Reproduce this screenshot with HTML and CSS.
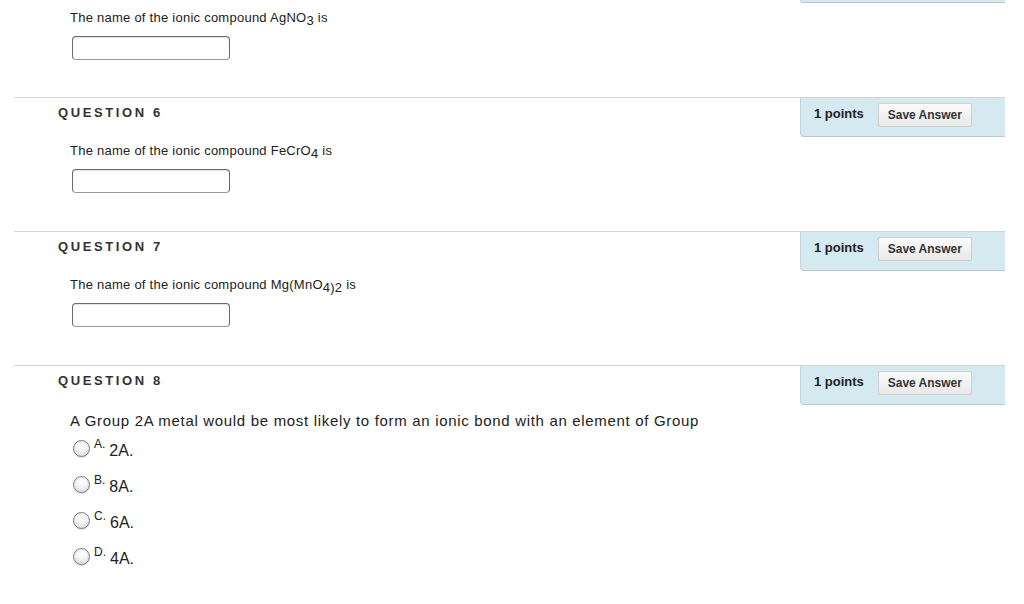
FILE: index.html
```html
<!DOCTYPE html>
<html>
<head>
<meta charset="utf-8">
<link rel="stylesheet" href="styles.css">
</head>
<body>
<div class="page">
  <div class="question q-partial">
    <div class="q-stub"></div>
    <div class="q-body">
      <div class="q-text first">The name of the ionic compound AgNO<span class="sub">3</span> is</div>
      <div class="q-input"></div>
    </div>
  </div>
  <div class="question">
    <div class="q-head">
      <div class="q-title">QUESTION 6</div>
      <div class="q-points"><span class="pts">1 points</span><button class="save">Save Answer</button></div>
    </div>
    <div class="q-body">
      <div class="q-text">The name of the ionic compound FeCrO<span class="sub">4</span> is</div>
      <div class="q-input"></div>
    </div>
  </div>
  <div class="question">
    <div class="q-head">
      <div class="q-title">QUESTION 7</div>
      <div class="q-points"><span class="pts">1 points</span><button class="save">Save Answer</button></div>
    </div>
    <div class="q-body">
      <div class="q-text">The name of the ionic compound Mg(MnO<span class="sub">4)2</span> is</div>
      <div class="q-input"></div>
    </div>
  </div>
  <div class="question last">
    <div class="q-head">
      <div class="q-title">QUESTION 8</div>
      <div class="q-points"><span class="pts">1 points</span><button class="save">Save Answer</button></div>
    </div>
    <div class="q-body mc">
      <div class="mc-text">A Group 2A metal would be most likely to form an ionic bond with an element of Group</div>
      <div class="opt"><span class="radio"></span><span class="letter">A.</span><span class="ans">2A.</span></div>
      <div class="opt"><span class="radio"></span><span class="letter">B.</span><span class="ans">8A.</span></div>
      <div class="opt"><span class="radio"></span><span class="letter">C.</span><span class="ans">6A.</span></div>
      <div class="opt"><span class="radio"></span><span class="letter">D.</span><span class="ans">4A.</span></div>
    </div>
  </div>
</div>
</body>
</html>
```
FILE: styles.css
```css
html, body {
  margin: 0;
  padding: 0;
  background: #ffffff;
}
body {
  font-family: "Liberation Sans", Arial, Helvetica, sans-serif;
  color: #222;
  overflow: hidden;
}
.page {
  width: 991px;
  margin-left: 14px;
}
.question {
  border-top: 1px solid #d4d4d4;
  height: 133px;
}
.question.q-partial {
  border-top: 0;
  height: 97px;
}
.question.last {
  height: auto;
}
.q-stub {
  margin-left: auto;
  width: 204px;
  height: 2px;
  background: #d4eaf0;
  border-left: 1px solid #c4d4d8;
  border-bottom: 1px solid #b9c9cd;
  border-bottom-left-radius: 4px;
}
.q-head {
  display: flex;
  justify-content: space-between;
  align-items: flex-start;
}
.q-title {
  padding-left: 44px;
  padding-top: 7px;
  font-size: 13px;
  font-weight: bold;
  letter-spacing: 2.6px;
  color: #333;
  line-height: 16px;
}
.q-points {
  width: 191px;
  height: 33px;
  padding: 5px 0 0 13px;
  background: #d4eaf0;
  border-left: 1px solid #c4d4d8;
  border-bottom: 1px solid #b9c9cd;
  border-bottom-left-radius: 4px;
  display: flex;
  align-items: flex-start;
}
.pts {
  font-size: 13px;
  font-weight: bold;
  color: #222;
  line-height: 22px;
  margin-right: 14px;
}
.save {
  width: 94px;
  height: 24px;
  padding: 0;
  font-family: "Liberation Sans", Arial, sans-serif;
  font-size: 12px;
  font-weight: bold;
  color: #333;
  background: linear-gradient(#fbfbfb, #e8e8e8);
  border: 1px solid #cfcfcf;
  border-radius: 2px;
}
.q-body {
  padding-left: 56px;
}
.q-text {
  margin-top: 5px;
  font-size: 13px;
  letter-spacing: 0.25px;
  line-height: 18px;
  color: #222;
}
.q-text.first {
  margin-top: 6px;
}
.sub {
  position: relative;
  top: 3px;
}
.q-input {
  margin-top: 9px;
  margin-left: 2px;
  width: 156px;
  height: 22px;
  border: 1px solid #6a6a6a;
  border-bottom-color: #9a9a9a;
  border-radius: 4px;
  box-shadow: inset 0 1px 1px rgba(0,0,0,0.12);
  background: #fff;
}
.mc-text {
  margin-top: 6px;
  font-size: 15px;
  letter-spacing: 0.68px;
  line-height: 19px;
  color: #222;
}
.opt {
  height: 36px;
  display: flex;
  align-items: center;
  padding-left: 3px;
}
.radio {
  width: 15px;
  height: 15px;
  border: 1px solid #7a7a7a;
  border-radius: 50%;
  background: radial-gradient(circle at 50% 35%, #ffffff 0%, #f2f2f2 45%, #d2d2d2 100%);
  box-shadow: 0 1px 1px rgba(0,0,0,0.15);
  flex: none;
}
.letter {
  font-size: 12px;
  margin-left: 4px;
  position: relative;
  top: -4px;
  color: #222;
}
.ans {
  font-size: 16px;
  margin-left: 4px;
  position: relative;
  top: 3px;
  color: #222;
}
```
